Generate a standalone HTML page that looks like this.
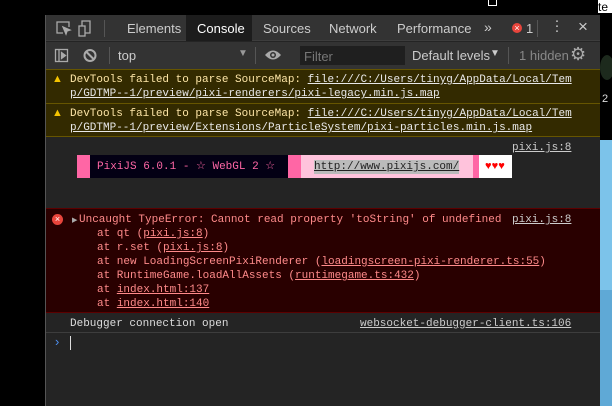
<!DOCTYPE html><html><head><style>
*{margin:0;padding:0;box-sizing:border-box}
body{width:612px;height:406px;background:#000;position:relative;overflow:hidden;font-family:"Liberation Sans",sans-serif}
.a{position:absolute}
#p{left:45px;top:15px;width:555px;height:391px;background:#242424;border-left:1px solid #555}
.t{font-size:13px;color:#ccc;top:6px}
.m{font-family:"Liberation Mono",monospace;font-size:11px;line-height:14px;white-space:pre}
u{text-decoration:underline}
.w{color:#fde5a6}.wl{color:#e8e8e8}
.e{color:#ff8a8a}.el{color:#ccc}
.sep{width:1px;background:#555}
.g{color:#aaa}
</style></head><body>
<div class="a" style="left:600px;top:140px;width:12px;height:266px;background:#7cc3ea"></div>
<div class="a" style="left:600px;top:290px;width:12px;height:116px;background:#5fa9d6"></div>
<div class="a" style="left:600px;top:55px;width:14px;height:25px;border-radius:50%;background:#1d2a1d"></div>
<div class="a" style="left:598px;top:0;width:14px;height:13px;background:#fff;color:#000;font-size:12px">te</div>
<div class="a" style="left:602px;top:93px;color:#ddd;font-size:11px">2</div>
<div class="a" style="left:488px;top:0;width:9px;height:6px;border:1px solid #fff;border-top:none"></div>
<div class="a" id="p"></div>
<!-- tab bar -->
<div class="a" style="left:46px;top:15px;width:554px;height:26px;background:#333;border-bottom:1px solid #3d3d3d"></div>
<svg class="a" style="left:55px;top:20px" width="46" height="17" viewBox="0 0 46 17" fill="none" stroke="#aaa" stroke-width="1.3">
<path d="M8 13H2V2h12v5"/><path d="M8 7l7 3-3 1-1 3z" fill="#aaa"/>
<rect x="24" y="6" width="6" height="10"/><path d="M27 6V1h8v12h-5"/></svg>
<div class="a sep" style="left:104px;top:20px;height:17px"></div>
<div class="a t" style="left:127px;top:21px">Elements</div>
<div class="a" style="left:186px;top:15px;width:66px;height:26px;background:#1c1c1c"></div>
<div class="a t" style="left:197px;top:21px;color:#fff">Console</div>
<div class="a t" style="left:263px;top:21px">Sources</div>
<div class="a t" style="left:329px;top:21px">Network</div>
<div class="a t" style="left:397px;top:21px">Performance</div>
<div class="a t" style="left:484px;top:19px;font-size:14px">»</div>
<div class="a" style="left:512px;top:23px;width:10px;height:10px;border-radius:50%;background:#e8453c;color:#fff;font-size:9px;line-height:10px;text-align:center">×</div>
<div class="a t" style="left:526px;top:21px">1</div>
<div class="a sep" style="left:537px;top:20px;height:17px"></div>
<div class="a t" style="left:554px;top:18px;font-size:15px;line-height:5px;width:6px;text-align:center">·<br>·<br>·</div>
<div class="a t" style="left:578px;top:17px;font-size:17px">×</div>
<!-- toolbar -->
<div class="a" style="left:46px;top:42px;width:554px;height:27px;background:#333"></div>
<svg class="a" style="left:54px;top:47px" width="46" height="17" viewBox="0 0 46 17" fill="none" stroke="#aaa" stroke-width="1.3">
<rect x="1.5" y="2.5" width="12" height="12"/><path d="M5 3v11"/><path d="M7.5 5.5l4 3-4 3z" fill="#aaa"/>
<circle cx="36" cy="8.5" r="5.5" stroke-width="2"/><path d="M32 4.5l8 8" stroke-width="2"/></svg>
<div class="a sep" style="left:109px;top:47px;height:17px"></div>
<div class="a t" style="left:118px;top:48px">top</div>
<div class="a t" style="left:238px;top:48px;font-size:10px;color:#999">▼</div>
<div class="a sep" style="left:255px;top:47px;height:17px"></div>
<svg class="a" style="left:264px;top:49px" width="18" height="12" viewBox="0 0 18 12"><path d="M1 6Q9-3 17 6Q9 15 1 6z" fill="#aaa"/><circle cx="9" cy="6" r="3" fill="#333"/><circle cx="9" cy="6" r="1.5" fill="#aaa"/></svg>
<div class="a" style="left:300px;top:46px;width:105px;height:19px;background:#1f1f1f"></div>
<div class="a t" style="left:304px;top:49px;color:#777">Filter</div>
<div class="a t" style="left:412px;top:48px">Default levels</div>
<div class="a t" style="left:490px;top:48px;font-size:10px">▼</div>
<div class="a sep" style="left:508px;top:47px;height:17px"></div>
<div class="a t" style="left:519px;top:48px;color:#888">1 hidden</div>
<div class="a t" style="left:570px;top:44px;font-size:18px;color:#aaa">⚙</div>
<!-- warnings -->
<div class="a" style="left:46px;top:69px;width:554px;height:34px;background:#332a00;border-top:1px solid #665500"></div>
<div class="a" style="left:46px;top:103px;width:554px;height:34px;background:#332a00;border-top:1px solid #665500;border-bottom:1px solid #665500"></div>
<div class="a" style="left:52px;top:73px;color:#f5c400;font-size:11px">▲</div>
<div class="a" style="left:52px;top:107px;color:#f5c400;font-size:11px">▲</div>
<div class="a m w" style="left:70px;top:73px">DevTools failed to parse SourceMap: <u class="wl">file:///C:/Users/tinyg/AppData/Local/Tem</u>
<u class="wl">p/GDTMP--1/preview/pixi-renderers/pixi-legacy.min.js.map</u></div>
<div class="a m w" style="left:70px;top:107px">DevTools failed to parse SourceMap: <u class="wl">file:///C:/Users/tinyg/AppData/Local/Tem</u>
<u class="wl">p/GDTMP--1/preview/Extensions/ParticleSystem/pixi-particles.min.js.map</u></div>
<!-- pixi banner -->
<div class="a m el" style="left:512px;top:141px"><u>pixi.js:8</u></div>
<div class="a" style="left:77px;top:155px;width:13px;height:23px;background:#ff66a5"></div>
<div class="a" style="left:90px;top:155px;width:198px;height:23px;background:#030014"></div>
<div class="a" style="left:288px;top:155px;width:13px;height:23px;background:#ff66a5"></div>
<div class="a" style="left:301px;top:155px;width:172px;height:23px;background:#ffc3dc"></div>
<div class="a" style="left:473px;top:155px;width:6px;height:23px;background:#ff66a5"></div>
<div class="a" style="left:479px;top:155px;width:33px;height:23px;background:#fff"></div>
<div class="a m" style="left:97px;top:160px;color:#ff66a5">PixiJS 6.0.1 - ☆ WebGL 2 ☆</div>
<div class="a m" style="left:314px;top:160px;color:#222;background:#bbb"><u>http://www.pixijs.com/</u></div>
<div class="a m" style="left:485px;top:160px;color:#f00">♥♥♥</div>
<!-- error -->
<div class="a" style="left:46px;top:208px;width:554px;height:105px;background:#290000;border-top:1px solid #5c0000;border-bottom:1px solid #5c0000"></div>
<div class="a" style="left:52px;top:214px;width:11px;height:11px;border-radius:50%;background:#e8453c;color:#fff;font-size:9px;line-height:11px;text-align:center">×</div>
<div class="a" style="left:72px;top:216px;color:#aaa;font-size:7px">▶</div>
<div class="a m e" style="left:79px;top:213px">Uncaught TypeError: Cannot read property 'toString' of undefined</div>
<div class="a m el" style="left:512px;top:213px"><u>pixi.js:8</u></div>
<div class="a m e" style="left:97px;top:227px">at qt (<u>pixi.js:8</u>)
at r.set (<u>pixi.js:8</u>)
at new LoadingScreenPixiRenderer (<u>loadingscreen-pixi-renderer.ts:55</u>)
at RuntimeGame.loadAllAssets (<u>runtimegame.ts:432</u>)
at <u>index.html:137</u>
at <u>index.html:140</u></div>
<!-- debugger -->
<div class="a m" style="left:70px;top:317px;color:#ddd">Debugger connection open</div>
<div class="a m el" style="left:360px;top:317px"><u>websocket-debugger-client.ts:106</u></div>
<div class="a" style="left:46px;top:332px;width:554px;height:1px;background:#3d3d3d"></div>
<div class="a" style="left:55px;top:334px;color:#4d8ff0;font-size:13px">›</div>
<div class="a" style="left:70px;top:336px;width:1px;height:14px;background:#ddd"></div>
</body></html>
